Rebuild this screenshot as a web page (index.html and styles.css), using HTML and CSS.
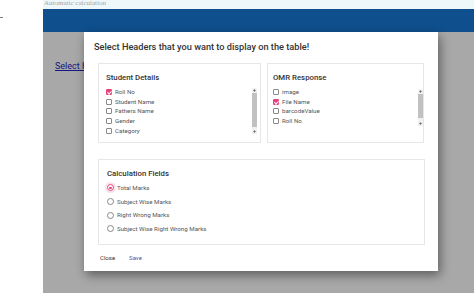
FILE: index.html
```html
<!DOCTYPE html>
<html>
<head>
<meta charset="utf-8">
<link rel="stylesheet" href="styles.css">
</head>
<body>
<div class="page">
  <div class="side"><span class="dash"></span></div>
  <div class="main">
    <div class="strip">Automatic calculation</div>
    <div class="navbar"></div>
    <div class="content">
      <a class="link" href="#">Select Headers</a>
      <div class="overlay"></div>
      <div class="modal">
        <h2 class="title">Select Headers that you want to display on the table!</h2>
        <div class="body">
          <div class="row">
            <section class="card card-student">
              <h3 class="card-title">Student Details</h3>
              <div class="scroll">
                <ul class="list">
                  <li><span class="cb on"></span>Roll No</li>
                  <li><span class="cb"></span>Student Name</li>
                  <li><span class="cb"></span>Fathers Name</li>
                  <li><span class="cb"></span>Gender</li>
                  <li><span class="cb"></span>Category</li>
                </ul>
                <div class="sbar sbar-student">
                  <span class="arrow"></span>
                  <span class="thumb"></span>
                  <span class="arrow"></span>
                </div>
              </div>
            </section>
            <section class="card card-omr">
              <h3 class="card-title">OMR Response</h3>
              <div class="scroll">
                <ul class="list">
                  <li><span class="cb"></span>image</li>
                  <li><span class="cb on"></span>File Name</li>
                  <li><span class="cb"></span>barcodeValue</li>
                  <li><span class="cb"></span>Roll No</li>
                </ul>
                <div class="sbar sbar-omr">
                  <span class="arrow"></span>
                  <span class="thumb"></span>
                  <span class="arrow"></span>
                </div>
              </div>
            </section>
          </div>
          <section class="card card-calc">
            <h3 class="card-title">Calculation Fields</h3>
            <ul class="radios">
              <li><span class="rd on"></span>Total Marks</li>
              <li><span class="rd"></span>Subject Wise Marks</li>
              <li><span class="rd"></span>Right Wrong Marks</li>
              <li><span class="rd"></span>Subject Wise Right Wrong Marks</li>
            </ul>
          </section>
        </div>
        <div class="actions">
          <button class="btn">Close</button>
          <button class="btn save">Save</button>
        </div>
      </div>
    </div>
  </div>
</div>
</body>
</html>
```

FILE: styles.css
```css
* { box-sizing: border-box; }
html, body { margin: 0; padding: 0; }
body {
  width: 474px;
  height: 293px;
  overflow: hidden;
  background: #fff;
  font-family: Roboto, "Liberation Sans", sans-serif;
}
.page {
  display: flex;
  height: 293px;
}
.side {
  width: 43px;
  flex: none;
  background: #fff;
}
.dash {
  display: block;
  width: 3px;
  height: 1px;
  margin-top: 17px;
  background: #777;
}
.main {
  flex: 1;
  display: flex;
  flex-direction: column;
}
.strip {
  height: 9px;
  background: #eef8fb;
  color: #a0a4a8;
  font-family: "Liberation Serif", serif;
  font-size: 7px;
  line-height: 6px;
  padding-left: 1px;
  overflow: hidden;
}
.navbar {
  height: 23px;
  background: #0f4f8d;
}
.content {
  flex: 1;
  position: relative;
  background: #fff;
  padding: 22px 12px 0;
}
.link {
  font-size: 9px;
  line-height: 12px;
  color: #2424c4;
  text-decoration: underline;
}
.overlay {
  position: absolute;
  inset: 0;
  background: rgba(0, 0, 0, 0.34);
}
.modal {
  position: absolute;
  left: 41px;
  top: 0;
  width: 354px;
  height: 239px;
  background: #fff;
  box-shadow: 2px 4px 10px rgba(0, 0, 0, 0.45);
}
.title {
  margin: 0;
  padding: 8px 10px 0;
  font-size: 9.2px;
  line-height: 14px;
  font-weight: 500;
  color: #333;
}
.body {
  padding: 9px 13px 0 14px;
}
.row {
  display: grid;
  grid-template-columns: 163px 157px;
  column-gap: 6px;
}
.card {
  border: 1px solid #e6e6e6;
  background: #fff;
}
.card-student {
  height: 80px;
  padding: 8px 3px 0 7px;
}
.card-omr {
  height: 80px;
  padding: 8px 0 0 5px;
}
.card-title {
  margin: 0;
  font-size: 7.8px;
  line-height: 11px;
  font-weight: 500;
  color: #333;
}
.scroll {
  display: flex;
  align-items: flex-start;
  margin-top: 4px;
}
.list {
  flex: 1;
  list-style: none;
  margin: 0;
  padding: 0;
}
.list li {
  display: flex;
  align-items: center;
  height: 9.75px;
  font-size: 6.2px;
  color: #555;
  white-space: nowrap;
}
.sbar {
  width: 5px;
  flex: none;
  display: flex;
  flex-direction: column;
  background: #f1f1f1;
  margin-top: 1px;
}
.sbar-student { height: 46px; }
.sbar-omr { height: 37px; margin-top: 2px; }
.arrow {
  height: 5px;
  flex: none;
  background: radial-gradient(circle, #666 0.8px, transparent 1.3px);
}
.thumb {
  flex: 1;
  background: #c1c1c1;
}
.sbar-student .thumb { margin-bottom: 2px; }
.sbar-omr .thumb { margin-bottom: 3px; }
.cb {
  width: 6px;
  height: 6px;
  flex: none;
  margin: 0 3px 0 0;
  border: 1px solid #888;
  border-radius: 1px;
  position: relative;
}
.cb.on {
  background: #e8407a;
  border-color: #e8407a;
}
.cb.on::after {
  content: "";
  position: absolute;
  left: 1px;
  top: 0;
  width: 1.5px;
  height: 3px;
  border: solid #fff;
  border-width: 0 1px 1px 0;
  transform: rotate(45deg);
}
.card-calc {
  margin-top: 16px;
  height: 86px;
  padding: 8px 7px 0 8px;
}
.radios {
  list-style: none;
  margin: 2px 0 0;
  padding: 0;
}
.radios li {
  display: flex;
  align-items: center;
  height: 13.7px;
  font-size: 6.2px;
  color: #555;
}
.rd {
  width: 7px;
  height: 7px;
  flex: none;
  margin-right: 3px;
  border: 1px solid #888;
  border-radius: 50%;
  position: relative;
}
.rd.on {
  border-color: #e8407a;
  box-shadow: 0 0 0 2px rgba(232, 64, 122, 0.15);
}
.rd.on::after {
  content: "";
  position: absolute;
  left: 1.25px;
  top: 1.25px;
  width: 2.5px;
  height: 2.5px;
  border-radius: 50%;
  background: #e8407a;
}
.actions {
  display: flex;
  gap: 14px;
  margin-top: 8px;
  padding-left: 16px;
}
.btn {
  border: 0;
  background: none;
  padding: 0;
  font-family: Roboto, "Liberation Sans", sans-serif;
  font-size: 6px;
  line-height: 10px;
  color: #333;
}
.btn.save {
  color: #5555aa;
}
```
